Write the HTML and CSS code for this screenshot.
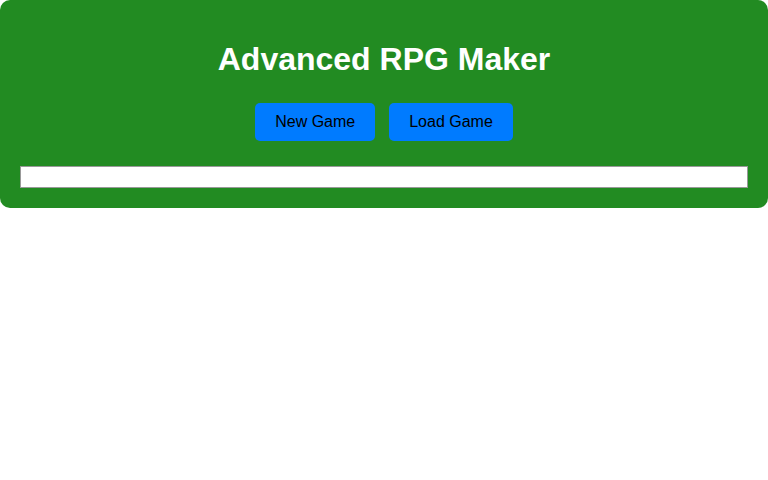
FILE: index.html
```html
<!DOCTYPE html>
<html>
	<head>
		<meta charset="UTF-8">
		<title>Advanced RPG Maker</title>
		<link rel="stylesheet" href="styles.css">
	</head>
	<body>
		<div class="menu">
			<h1 class="title">Advanced RPG Maker</h1>
			<div class="buttons">
				<button class="btn" id="newGame">New Game</button>
				<button class="btn" id="loadGame">Load Game</button>
			</div>
			<input type="text" class="console" id="output">
		</div>
	</body>
</html>
```
FILE: styles.css
```css
* { margin:0; padding:0; box-sizing:border-box; }
body { font-family:"Liberation Sans", Arial, sans-serif; background:#fff; }

.menu { background:#228b22; border-radius:10px; padding:20px; text-align:center; }
.title { color:#fff; font-size:32px; font-weight:bold; margin:21px 0 25px; }

.buttons { display:flex; justify-content:center; gap:14px; }
.btn { background:#007bff; color:#000; border:none; border-radius:5px; padding:10px 20px; font-family:inherit; font-size:16px; cursor:pointer; }

/* output line under the buttons */
.console { display:block; width:100%; height:22px; margin-top:25px; border:1px solid #999; background:#fff; }
```
